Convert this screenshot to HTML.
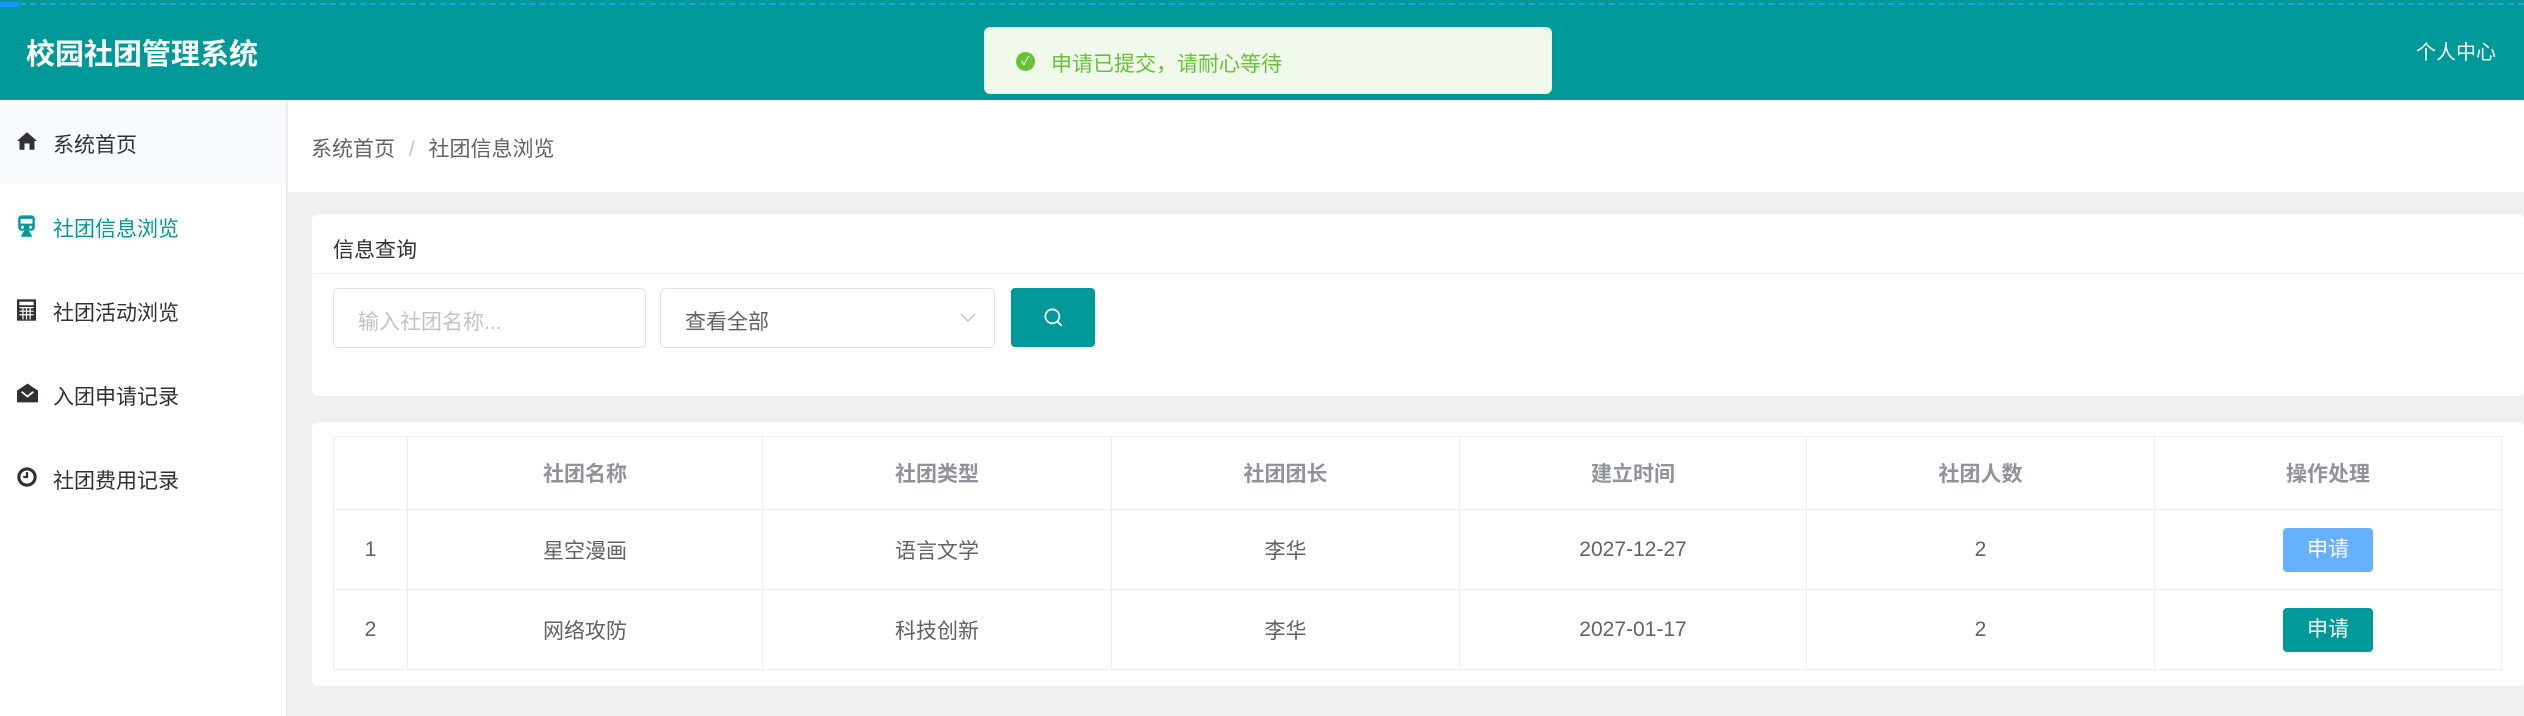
<!DOCTYPE html><html><head><meta charset="utf-8"><style>
*{margin:0;padding:0;box-sizing:border-box}
body{width:2524px;height:716px;overflow:hidden;background:#f0f0f0;font-family:"Liberation Sans","Noto Sans CJK SC",sans-serif;position:relative;color:#303133}
.hd{position:absolute;left:0;top:0;width:2524px;height:100px;background:#009999}
.dash{position:absolute;left:0;top:3px;width:2524px;border-top:2px dashed #3aa0ff;opacity:.7}
.bar{position:absolute;left:0;top:2px;width:19px;height:5px;background:#1e90ff}
.title{position:absolute;left:26px;top:31px;color:#fff;font-size:29px;font-weight:bold}
.me{position:absolute;right:28px;top:36px;color:#fff;font-size:20px}
.toast{position:absolute;left:984px;top:27px;width:568px;height:67px;background:#f0f9eb;border:1px solid #e1f3d8;border-radius:6px}
.toast .ic{position:absolute;left:31px;top:24px;width:19px;height:19px;border-radius:50%;background:#67c23a;color:#fff;font-size:12px;line-height:19px;text-align:center}
.toast .t{position:absolute;left:66px;top:20px;color:#67c23a;font-size:21px}
.side{position:absolute;left:0;top:100px;width:287px;height:616px;background:#fff;border-right:1px solid #e6e6e6}
.it{position:absolute;left:0;width:286px;height:84px;font-size:21px;color:#303133}
.it span{position:absolute;left:53px;top:29px}
.it i{position:absolute;left:17px;top:31px;width:20px;height:22px;font-style:normal}
.bc{position:absolute;left:288px;top:100px;width:2236px;height:92px;background:#fff;font-size:21px;color:#606266}
.card{position:absolute;left:312px;width:2212px;background:#fff;border-radius:6px}
.inp{position:absolute;top:288px;height:60px;border:1px solid #dcdfe6;border-radius:5px;font-size:21px;background:#fff}
table{position:absolute;left:333px;top:436px;width:2169px;border-collapse:collapse;font-size:21px;color:#606266;text-align:center}
td,th{border:1px solid #ebeef5}
th{height:73px;color:#909399;font-weight:bold}
td{height:80px}
.btn{display:inline-block;width:90px;height:44px;line-height:44px;border-radius:4px;color:#fff;font-size:21px}
</style></head><body>
<div class="hd"></div><div class="dash"></div><div class="bar"></div>
<div class="title">校园社团管理系统</div>
<div class="me">个人中心</div>
<div class="toast"><div class="ic">✓</div><div class="t">申请已提交，请耐心等待</div></div>
<div class="side">
<div class="it" style="top:0;background:#f7fbfe"><i><svg width="20" height="20" viewBox="0 0 16 16"><path d="M8 1L0 8h2v7h4v-5h4v5h4V8h2z" fill="#303133"/></svg></i><span>系统首页</span></div>
<div class="it" style="top:84px;color:#009999"><i><svg width="19" height="22" viewBox="0 0 16 18"><rect x="1" y="0" width="14" height="13" rx="3" fill="#009999"/><rect x="3" y="3" width="10" height="4" fill="#fff"/><circle cx="4.5" cy="10" r="1.3" fill="#fff"/><circle cx="11.5" cy="10" r="1.3" fill="#fff"/><path d="M3 18l3-5h4l3 5z" fill="#009999"/></svg></i><span>社团信息浏览</span></div>
<div class="it" style="top:168px"><i><svg width="19" height="22" viewBox="0 0 16 18"><rect x="0" y="0" width="16" height="18" fill="#303133"/><rect x="2" y="2" width="12" height="3" fill="#fff"/><path d="M2 7h12M2 10h12M2 13h12M5 7v10M8 7v10M11 7v10" stroke="#fff" stroke-width="1"/></svg></i><span>社团活动浏览</span></div>
<div class="it" style="top:252px"><i><svg width="21" height="20" viewBox="0 0 18 16"><path d="M9 0L0 6v10h18V6z" fill="#303133"/><path d="M4 7l5 4 5-4" stroke="#fff" stroke-width="1.5" fill="none"/></svg></i><span>入团申请记录</span></div>
<div class="it" style="top:336px"><i><svg width="20" height="20" viewBox="0 0 16 16"><circle cx="8" cy="8" r="6.5" stroke="#303133" stroke-width="2.5" fill="none"/><path d="M8 4v4H5" stroke="#303133" stroke-width="1.8" fill="none"/></svg></i><span>社团费用记录</span></div>
</div>
<div class="bc"><span style="position:absolute;left:23px;top:33px">系统首页 <span style="color:#c0c4cc;margin:0 8px">/</span> 社团信息浏览</span></div>
<div class="card" style="top:214px;height:182px">
<div style="position:absolute;left:21px;top:20px;font-size:21px;color:#303133">信息查询</div>
<div style="position:absolute;left:0;top:59px;width:100%;border-top:1px solid #ebeef5"></div>
</div>
<div class="inp" style="left:333px;width:313px;color:#c0c4cc"><span style="position:absolute;left:24px;top:17px">输入社团名称...</span></div>
<div class="inp" style="left:660px;width:335px;color:#606266"><span style="position:absolute;left:24px;top:17px">查看全部</span><svg style="position:absolute;right:18px;top:24px" width="16" height="10" viewBox="0 0 16 10"><path d="M1 1l7 7 7-7" stroke="#c0c4cc" stroke-width="1.5" fill="none"/></svg></div>
<div style="position:absolute;left:1011px;top:288px;width:84px;height:59px;background:#009999;border-radius:4px"><svg style="position:absolute;left:32px;top:19px" width="21" height="21" viewBox="0 0 18 18"><circle cx="8" cy="8" r="6" stroke="#fff" stroke-width="1.5" fill="none"/><path d="M12.5 12.5l3.5 3.5" stroke="#fff" stroke-width="1.5"/></svg></div>
<div class="card" style="top:422px;height:264px"></div>
<table>
<tr><th style="width:74px"></th><th style="width:355px">社团名称</th><th style="width:349px">社团类型</th><th style="width:348px">社团团长</th><th style="width:347px">建立时间</th><th style="width:348px">社团人数</th><th>操作处理</th></tr>
<tr><td>1</td><td>星空漫画</td><td>语言文学</td><td>李华</td><td>2027-12-27</td><td>2</td><td><span class="btn" style="background:#66b1ff">申请</span></td></tr>
<tr><td>2</td><td>网络攻防</td><td>科技创新</td><td>李华</td><td>2027-01-17</td><td>2</td><td><span class="btn" style="background:#009999">申请</span></td></tr>
</table>
</body></html>
